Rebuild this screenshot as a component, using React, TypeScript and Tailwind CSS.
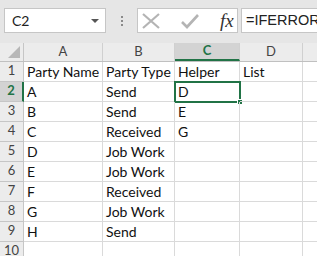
const cols = [
  { key: 'A', w: 'w-[79px]' },
  { key: 'B', w: 'w-[72px]' },
  { key: 'C', w: 'w-[65px]' },
  { key: 'D', w: 'w-[63px]' },
  { key: 'E', w: 'w-[60px]' },
];

const rows: string[][] = [
  ['Party Name', 'Party Type', 'Helper', 'List', ''],
  ['A', 'Send', 'D', '', ''],
  ['B', 'Send', 'E', '', ''],
  ['C', 'Received', 'G', '', ''],
  ['D', 'Job Work', '', '', ''],
  ['E', 'Job Work', '', '', ''],
  ['F', 'Received', '', '', ''],
  ['G', 'Job Work', '', '', ''],
  ['H', 'Send', '', '', ''],
  ['', '', '', '', ''],
];

function FormulaBar() {
  return (
    <div className="flex h-[43px] items-start bg-[#e6e6e6] pt-[8px] pl-[4px]">
      <div className="flex h-[25px] w-[102px] shrink-0 items-center justify-between border border-[#c6c6c6] bg-white pl-[7px] pr-[6px]">
        <span className="text-[14px] text-[#222]">C2</span>
        <span className="h-0 w-0 border-x-[4px] border-t-[4px] border-x-transparent border-t-[#555]" />
      </div>
      <div className="flex h-[25px] w-[31px] shrink-0 flex-col items-center justify-center gap-[2px]">
        <span className="h-[2px] w-[2px] bg-[#8a8a8a]" />
        <span className="h-[2px] w-[2px] bg-[#8a8a8a]" />
        <span className="h-[2px] w-[2px] bg-[#8a8a8a]" />
      </div>
      <div className="flex h-[25px] w-[101px] shrink-0 items-center border border-[#c6c6c6] bg-white">
        <svg width="20" height="18" viewBox="0 0 20 18" className="ml-[3px] shrink-0">
          <path d="M2 2 L18 16 M18 2 L2 16" stroke="#b4b4b4" strokeWidth="2.2" fill="none" />
        </svg>
        <svg width="20" height="18" viewBox="0 0 20 18" className="ml-[19px] shrink-0">
          <path d="M2 10 L7 15 L18 3" stroke="#b4b4b4" strokeWidth="2.6" fill="none" />
        </svg>
        <span className="ml-[20px] font-['Liberation_Serif',serif] text-[19px] italic leading-none text-[#333]">
          fx
        </span>
      </div>
      <div className="ml-[3px] flex h-[25px] min-w-0 flex-1 items-center overflow-hidden border border-r-0 border-[#c6c6c6] bg-white pl-[4px]">
        <span className="whitespace-nowrap font-['Liberation_Sans',sans-serif] text-[14.5px] text-[#222]">=IFERROR(INDEX(</span>
      </div>
    </div>
  );
}

export default function App() {
  return (
    <div className="h-[256px] w-[317px] overflow-hidden bg-white font-['Lato','Liberation_Sans',sans-serif]">
      <FormulaBar />
      <div className="flex h-[19px] border-b border-[#c0c0c0] bg-[#ececec]">
        <div className="relative w-[24px] shrink-0 border-r border-[#c6c6c6]">
          <span className="absolute bottom-[3px] right-[3px] h-0 w-0 border-b-[12px] border-l-[12px] border-b-[#b7b7b7] border-l-transparent" />
        </div>
        {cols.map((c) => (
          <div
            key={c.key}
            className={`${c.w} flex shrink-0 items-center justify-center border-r border-[#d0d0d0] text-[13px] ${
              c.key === 'C'
                ? 'border-b-2 border-b-[#217346] bg-[#d3d3d3] font-bold text-[#217346]'
                : 'text-[#444]'
            }`}
          >
            {c.key}
          </div>
        ))}
      </div>
      {rows.map((r, i) => (
        <div key={i} className="flex h-[20px]">
          <div
            className={`flex w-[24px] shrink-0 items-end justify-center border-b border-r pb-[1px] text-[13px] ${
              i === 1
                ? 'border-b-[#c6c6c6] border-r-2 border-r-[#217346] bg-[#d3d3d3] font-bold text-[#217346]'
                : 'border-[#c6c6c6] bg-[#ececec] text-[#444]'
            }`}
          >
            {i + 1}
          </div>
          {cols.map((c, j) => (
            <div
              key={c.key}
              className={`${c.w} relative flex shrink-0 items-end whitespace-nowrap border-b border-r border-[#dadada] pb-[1px] pl-[3px] text-[14px] leading-[17px] text-[#111]`}
            >
              {r[j]}
              {i === 1 && j === 2 && (
                <span className="pointer-events-none absolute -left-[1px] -top-[1px] h-[22px] w-[67px] border-2 border-[#217346]">
                  <span className="absolute -bottom-[4px] -right-[4px] h-[6px] w-[6px] border border-white bg-[#217346]" />
                </span>
              )}
            </div>
          ))}
        </div>
      ))}
    </div>
  );
}
